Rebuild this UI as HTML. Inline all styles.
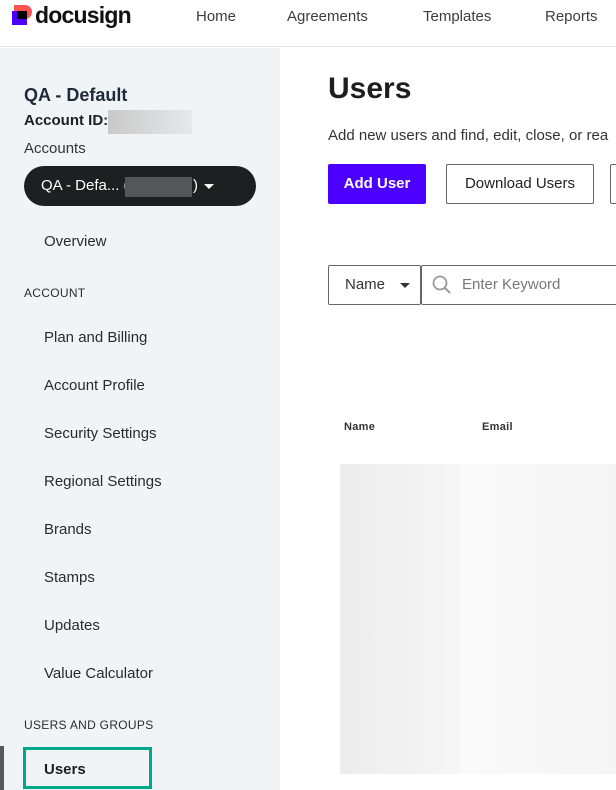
<!DOCTYPE html>
<html><head><style>
*{margin:0;padding:0;box-sizing:border-box}
body{width:616px;height:790px;overflow:hidden;font-family:"Liberation Sans",sans-serif;background:#fff;position:relative;color:#1e1e1e}
.a{position:absolute;white-space:nowrap}
.hdr{position:absolute;left:0;top:0;width:616px;height:47px;border-bottom:1px solid #e3e6ea;background:#fff}
.nav{font-size:15px;color:#3d3d3d;top:8px}
.side{position:absolute;left:0;top:48px;width:280px;height:742px;background:#f1f4f7}
.item{font-size:15px;color:#2b2b2b;left:44px}
.sec{font-size:12px;color:#2b2b2b;left:24px;letter-spacing:.3px}
.blur{position:absolute;background:linear-gradient(90deg,#f2f2f2,#fafafa 40%,#f5f5f5);}
</style></head><body>
<div class="hdr">
  <div class="a" style="left:14px;top:5px;width:18px;height:14px;background:#ff5252;border-radius:0 7px 7px 0"></div>
  <div class="a" style="left:12px;top:11px;width:15px;height:14px;background:#4c00ff"></div>
  <div class="a" style="left:17px;top:11px;width:10px;height:8px;background:#000"></div>
  <div class="a" style="left:35px;top:2px;font-size:23px;font-weight:bold;color:#111;letter-spacing:-0.8px">docusign</div>
  <div class="a nav" style="left:196px">Home</div>
  <div class="a nav" style="left:287px">Agreements</div>
  <div class="a nav" style="left:423px">Templates</div>
  <div class="a nav" style="left:545px">Reports</div>
</div>
<div class="side">
  <div class="a" style="left:24px;top:37px;font-size:18px;font-weight:bold;color:#1e2a3a">QA - Default</div>
  <div class="a" style="left:24px;top:64px;font-size:15px;font-weight:bold;color:#1e1e1e">Account ID:</div>
  <div class="a" style="left:108px;top:62px;width:84px;height:24px;background:linear-gradient(90deg,#c9c9c9,#e6e8ea)"></div>
  <div class="a" style="left:24px;top:92px;font-size:15px;color:#333">Accounts</div>
  <div class="a" style="left:24px;top:118px;width:232px;height:40px;border-radius:20px;background:#1d1f21"></div>
  <div class="a" style="left:41px;top:129px;font-size:15px;color:#fff">QA - Defa... (</div>
  <div class="a" style="left:125px;top:129px;width:67px;height:20px;background:#555659"></div>
  <div class="a" style="left:193px;top:129px;font-size:15px;color:#fff">)</div>
  <div class="a" style="left:204px;top:136px;border-left:5px solid transparent;border-right:5px solid transparent;border-top:5px solid #fff"></div>
  <div class="a item" style="top:185px">Overview</div>
  <div class="a sec" style="top:238px">ACCOUNT</div>
  <div class="a item" style="top:281px">Plan and Billing</div>
  <div class="a item" style="top:329px">Account Profile</div>
  <div class="a item" style="top:377px">Security Settings</div>
  <div class="a item" style="top:425px">Regional Settings</div>
  <div class="a item" style="top:473px">Brands</div>
  <div class="a item" style="top:521px">Stamps</div>
  <div class="a item" style="top:569px">Updates</div>
  <div class="a item" style="top:617px">Value Calculator</div>
  <div class="a sec" style="top:670px">USERS AND GROUPS</div>
  <div class="a" style="left:0;top:698px;width:4px;height:44px;background:#55585c"></div>
  <div class="a" style="left:23px;top:699px;width:129px;height:42px;border:3px solid #00a88a"></div>
  <div class="a" style="left:44px;top:713px;font-size:15px;font-weight:bold;color:#1e1e1e">Users</div>
</div>
<div class="a" style="left:328px;top:72px;font-size:30px;font-weight:bold;color:#1e1e1e">Users</div>
<div class="a" style="left:328px;top:127px;font-size:15px;color:#333">Add new users and find, edit, close, or rea</div>
<div class="a" style="left:328px;top:164px;width:98px;height:40px;background:#4c00ff;border-radius:2px;color:#fff;font-weight:bold;font-size:15px;text-align:center;line-height:40px">Add User</div>
<div class="a" style="left:446px;top:164px;width:148px;height:40px;border:1px solid #666;border-radius:2px;font-size:15px;text-align:center;line-height:38px;color:#222">Download Users</div>
<div class="a" style="left:610px;top:164px;width:20px;height:40px;border:1px solid #666;border-radius:2px"></div>
<div class="a" style="left:328px;top:265px;width:93px;height:40px;border:1px solid #666;border-radius:2px"></div>
<div class="a" style="left:345px;top:276px;font-size:15px;color:#333">Name</div>
<div class="a" style="left:400px;top:283px;border-left:5px solid transparent;border-right:5px solid transparent;border-top:5px solid #333"></div>
<div class="a" style="left:421px;top:265px;width:200px;height:40px;border:1px solid #666;border-radius:2px"></div>
<svg class="a" style="left:431px;top:274px" width="22" height="22" viewBox="0 0 22 22"><circle cx="9" cy="9" r="6.5" fill="none" stroke="#999" stroke-width="1.8"/><line x1="13.8" y1="13.8" x2="19" y2="19" stroke="#999" stroke-width="2"/></svg>
<div class="a" style="left:462px;top:276px;font-size:15px;color:#777">Enter Keyword</div>
<div class="a" style="left:344px;top:421px;font-size:11px;font-weight:bold;color:#333;letter-spacing:.3px">Name</div>
<div class="a" style="left:482px;top:421px;font-size:11px;font-weight:bold;color:#333;letter-spacing:.3px">Email</div>
<div class="blur" style="left:340px;top:464px;width:276px;height:310px"></div>
<div class="blur" style="left:340px;top:464px;width:120px;height:310px;background:linear-gradient(90deg,#ececec,#f6f6f6)"></div>
</body></html>
